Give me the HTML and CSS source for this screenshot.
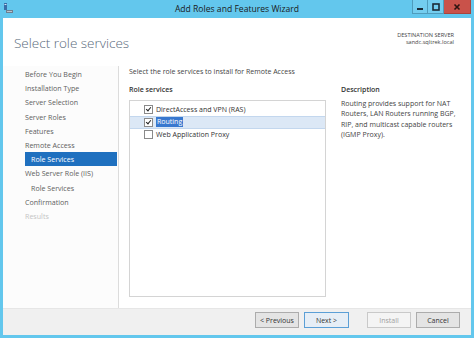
FILE: index.html
```html
<!DOCTYPE html>
<html lang="en">
<head>
    <meta charset="UTF-8">
    <title>Add Roles and Features Wizard</title>
    <link rel="stylesheet" href="styles.css">
</head>
<body>
    <div class="window">
        <div class="titlebar">
            <div class="app-icon">
                <svg width="10" height="11" viewBox="0 0 10 11">
                    <rect x="1" y="0" width="3" height="7" fill="#3a6ea5"/>
                    <rect x="1.5" y="1" width="2" height="1" fill="#cfe3f5"/>
                    <rect x="3" y="7" width="7" height="3" fill="#6f7f8f"/>
                    <rect x="4" y="8" width="5" height="1" fill="#b9c4cf"/>
                </svg>
            </div>
            <div class="title">Add Roles and Features Wizard</div>
            <div class="controls">
                <div class="ctl">
                    <svg width="8" height="8" viewBox="0 0 8 8"><rect x="1" y="5" width="6" height="2" fill="#1b2a36"/></svg>
                </div>
                <div class="ctl">
                    <svg width="8" height="8" viewBox="0 0 8 8"><rect x="1" y="1" width="6" height="6" fill="none" stroke="#1b2a36" stroke-width="1.6"/></svg>
                </div>
                <div class="ctl close">
                    <svg width="8" height="8" viewBox="0 0 8 8"><path d="M1.5 1.5 L6.5 6.5 M6.5 1.5 L1.5 6.5" stroke="#2b1410" stroke-width="1.6"/></svg>
                </div>
            </div>
        </div>

        <div class="client">
            <div class="header">
                <h1>Select role services</h1>
                <div class="dest">
                    <div>DESTINATION SERVER</div>
                    <div>sandc.sqltrek.local</div>
                </div>
            </div>

            <div class="main">
                <ul class="nav">
                    <li>Before You Begin</li>
                    <li>Installation Type</li>
                    <li>Server Selection</li>
                    <li>Server Roles</li>
                    <li>Features</li>
                    <li>Remote Access</li>
                    <li class="sub active">Role Services</li>
                    <li>Web Server Role (IIS)</li>
                    <li class="sub">Role Services</li>
                    <li>Confirmation</li>
                    <li class="disabled">Results</li>
                </ul>

                <div class="content">
                    <p class="intro">Select the role services to install for Remote Access</p>
                    <div class="columns">
                        <div class="services">
                            <h2>Role services</h2>
                            <div class="listbox">
                                <div class="row">
                                    <span class="check on"></span>
                                    <span>DirectAccess and VPN (RAS)</span>
                                </div>
                                <div class="row selected">
                                    <span class="check on"></span>
                                    <span class="sel-text">Routing</span>
                                </div>
                                <div class="row">
                                    <span class="check"></span>
                                    <span>Web Application Proxy</span>
                                </div>
                            </div>
                        </div>
                        <div class="description">
                            <h2>Description</h2>
                            <p>Routing provides support for NAT<br>Routers, LAN Routers running BGP,<br>RIP, and multicast capable routers<br>(IGMP Proxy).</p>
                        </div>
                    </div>
                </div>
            </div>

            <div class="footer">
                <button>&lt; Previous</button>
                <button class="default">Next &gt;</button>
                <button class="install" disabled>Install</button>
                <button>Cancel</button>
            </div>
        </div>
    </div>
</body>
</html>
```

FILE: styles.css
```css
body {
    margin: 0;
    font-family: 'Open Sans', 'Noto Sans', sans-serif;
    color: #333;
}
.window {
    width: 474px;
    height: 338px;
    box-sizing: border-box;
    padding: 0 3px 3px 3px;
    background: #63c7ed;
    display: flex;
    flex-direction: column;
}
.titlebar {
    height: 18px;
    display: grid;
    grid-template-columns: 1fr auto 1fr;
    align-items: start;
}
.app-icon {
    padding-top: 3px;
    line-height: 0;
}
.title {
    font-size: 8.6px;
    line-height: 19px;
    color: #1a1a1a;
}
.controls {
    display: flex;
    justify-content: flex-end;
}
.ctl {
    width: 16px;
    height: 14px;
    box-sizing: border-box;
    border: 1px solid #4f9cbc;
    border-top: none;
    background: #73cdef;
    display: flex;
    align-items: center;
    justify-content: center;
}
.ctl + .ctl {
    border-left: none;
}
.ctl.close {
    width: 27px;
    background: #c9524a;
    border-color: #a8443d;
}
.client {
    flex: 1;
    background: #fff;
    display: flex;
    flex-direction: column;
}
.header {
    height: 48px;
    display: flex;
    justify-content: space-between;
}
h1 {
    margin: 0;
    padding: 16px 0 0 11px;
    font-size: 13.5px;
    font-weight: 300;
    color: #5a6b7c;
    line-height: 18px;
}
.dest {
    padding: 14px 17px 0 0;
    text-align: right;
    font-size: 5.6px;
    line-height: 7px;
    color: #444;
}
.main {
    flex: 1;
    display: flex;
}
.nav {
    list-style: none;
    margin: 0;
    padding: 1px 1px 0 22px;
    width: 92px;
    background: #fcfcfc;
    border-right: 1px solid #dcdcdc;
    font-size: 7.1px;
    color: #606060;
}
.nav li {
    height: 14.2px;
    line-height: 14.2px;
    white-space: nowrap;
}
.nav .sub {
    padding-left: 6px;
}
.nav .active {
    background: #1f70bf;
    color: #fff;
}
.nav .disabled {
    color: #c4c4c4;
}
.content {
    flex: 1;
    padding: 0 0 11px 10px;
    display: flex;
    flex-direction: column;
    font-size: 7px;
}
.intro {
    margin: 0;
    line-height: 11px;
    color: #444;
}
.columns {
    flex: 1;
    display: flex;
    gap: 15px;
    margin-top: 7px;
}
h2 {
    margin: 0;
    font-size: 7px;
    font-weight: 600;
    line-height: 11px;
    color: #333;
}
.services {
    width: 197px;
    display: flex;
    flex-direction: column;
}
.listbox {
    flex: 1;
    margin-top: 5px;
    border: 1px solid #d4d4d4;
    padding-top: 2.5px;
}
.row {
    height: 12.5px;
    box-sizing: border-box;
    display: flex;
    align-items: center;
    gap: 3px;
    padding-left: 14px;
    color: #333;
}
.row.selected {
    background: #dce8f6;
    border-top: 1px solid #c3d7ee;
    border-bottom: 1px solid #c3d7ee;
}
.check {
    width: 9px;
    height: 9px;
    box-sizing: border-box;
    border: 1px solid #8a8a8a;
    background: #fff;
    position: relative;
}
.check.on::after {
    content: '';
    position: absolute;
    left: 2px;
    top: 0;
    width: 2px;
    height: 4px;
    border: solid #222;
    border-width: 0 1.5px 1.5px 0;
    transform: rotate(40deg);
}
.sel-text {
    background: #3878cf;
    color: #fff;
    padding: 0 1px;
    line-height: 10px;
}
.description {
    flex: 1;
}
.description p {
    margin: 4px 0 0 0;
    line-height: 10.3px;
    color: #444;
}
.footer {
    height: 27px;
    box-sizing: border-box;
    background: #f0f0f0;
    border-top: 1px solid #e6e6e6;
    display: flex;
    justify-content: flex-end;
    align-items: flex-start;
    gap: 5px;
    padding: 3px 11px 0 0;
}
button {
    width: 44px;
    height: 16px;
    padding: 0;
    font-family: 'Open Sans', 'Noto Sans', sans-serif;
    font-size: 7px;
    color: #333;
    background: #e4e4e4;
    border: 1px solid #acacac;
}
button.default {
    width: 45px;
    border-color: #5b9fd6;
    background: #e6eef6;
}
button.install {
    margin-left: 13px;
    background: #f4f4f4;
    border-color: #c9c9c9;
    color: #a0a0a0;
}
```
